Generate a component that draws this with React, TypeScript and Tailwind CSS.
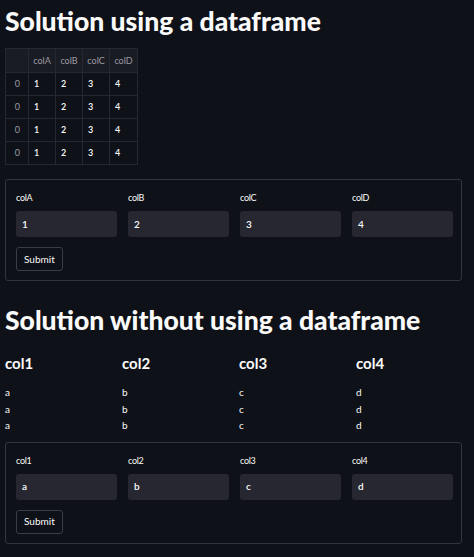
import React from 'react';

const FONT = { fontFamily: '"Source Sans Pro", Lato, "Noto Sans", sans-serif' };

const TABLE_COLS = ['colA', 'colB', 'colC', 'colD'];
const TABLE_ROWS = [
  ['0', '1', '2', '3', '4'],
  ['0', '1', '2', '3', '4'],
  ['0', '1', '2', '3', '4'],
  ['0', '1', '2', '3', '4'],
];

const DataTable: React.FC = () => (
  <div className="w-[133px] border border-[#262730]">
    <div className="flex h-[23px] bg-[#1a1c23] text-[9px] text-[#9a9ba3]">
      <div className="w-[23px] border-r border-[#262730]" />
      {TABLE_COLS.map((c) => (
        <div key={c} className="flex w-[27px] items-center justify-center border-r border-[#262730] last:border-r-0">
          {c}
        </div>
      ))}
    </div>
    {TABLE_ROWS.map((row, i) => (
      <div key={i} className="flex h-[23px] border-t border-[#262730] text-[9px]">
        <div className="flex w-[23px] items-center justify-end border-r border-[#262730] pr-[8px] text-[#9a9ba3]">
          {row[0]}
        </div>
        {row.slice(1).map((v, j) => (
          <div key={j} className="flex w-[27px] items-center border-r border-[#262730] pl-[5px] font-semibold text-[#fafafa] last:border-r-0">
            {v}
          </div>
        ))}
      </div>
    ))}
  </div>
);

interface FormProps {
  fields: { label: string; value: string }[];
}

const FieldForm: React.FC<FormProps> = ({ fields }) => (
  <div className="ml-[5px] w-[457px] rounded-[3px] border border-[#33353c] pb-[9px] pl-[10px] pr-[8px] pt-[12px]">
    <div className="grid grid-cols-4 gap-x-[11px]">
      {fields.map((f) => (
        <div key={f.label} className="flex flex-col">
          <span className="mb-[7px] text-[9px] leading-[12px] tracking-[-0.3px] text-[#fafafa]">{f.label}</span>
          <div className="flex h-[26px] items-center rounded-[3px] bg-[#262730] px-[6px] text-[10px] font-semibold text-[#fafafa]">
            {f.value}
          </div>
        </div>
      ))}
    </div>
    <button className="mt-[10px] h-[24px] rounded-[3px] border border-[#3b3d44] bg-[#0e1117] px-[7px] text-[10px] text-[#fafafa]">
      Submit
    </button>
  </div>
);

export default function App() {
  return (
    <div className="min-h-[557px] w-[474px] bg-[#0e1117] text-[#fafafa]" style={FONT}>
      <h1 className="px-[5px] pt-[4px] text-[26.5px] font-black leading-[34px]">Solution using a dataframe</h1>
      <div className="mt-[10px] px-[5px]">
        <DataTable />
      </div>
      <div className="mt-[14px]">
        <FieldForm
          fields={[
            { label: 'colA', value: '1' },
            { label: 'colB', value: '2' },
            { label: 'colC', value: '3' },
            { label: 'colD', value: '4' },
          ]}
        />
      </div>
      <h1 className="mt-[22px] px-[5px] text-[26.5px] font-black leading-[34px]">Solution without using a dataframe</h1>
      <div className="ml-[5px] mt-[16px] grid w-[457px] grid-cols-4 gap-x-[11px]">
        {[
          ['col1', 'a'],
          ['col2', 'b'],
          ['col3', 'c'],
          ['col4', 'd'],
        ].map(([h, v]) => (
          <div key={h} className="flex flex-col">
            <span className="text-[15px] font-bold leading-[20px]">{h}</span>
            <div className="mt-[11px] flex flex-col text-[10px] leading-[16.5px]">
              <span>{v}</span>
              <span>{v}</span>
              <span>{v}</span>
            </div>
          </div>
        ))}
      </div>
      <div className="mt-[8px]">
        <FieldForm
          fields={[
            { label: 'col1', value: 'a' },
            { label: 'col2', value: 'b' },
            { label: 'col3', value: 'c' },
            { label: 'col4', value: 'd' },
          ]}
        />
      </div>
    </div>
  );
}
